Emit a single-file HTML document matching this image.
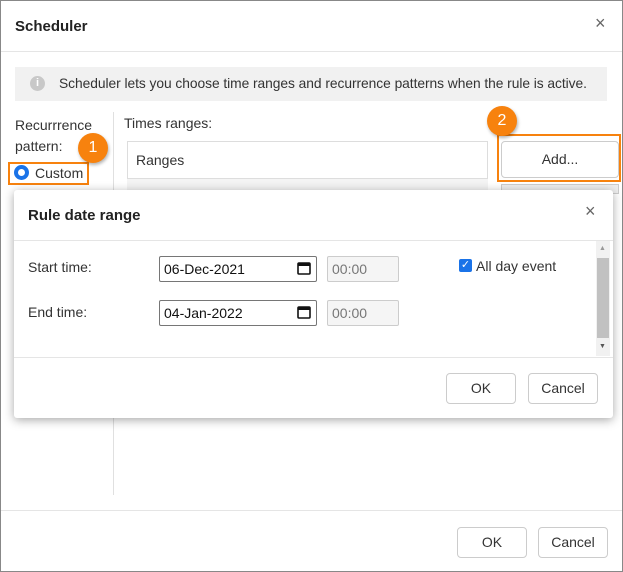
<!DOCTYPE html><html><head><style>
*{box-sizing:border-box}body{margin:0;width:623px;height:572px;font-family:"Liberation Sans",sans-serif;font-size:14px;color:#333;position:relative;overflow:hidden;background:#fff}
.a{position:absolute}
.btn{position:absolute;border:1px solid #ccc;border-radius:4px;background:#fff;text-align:center;font-size:14px;color:#333}
.badge{position:absolute;width:30px;height:30px;border-radius:50%;background:#f7820e;color:#fff;font-size:16px;text-align:center;line-height:30px;box-shadow:1px 2px 3px rgba(0,0,0,.3)}
.inp{position:absolute;border:1px solid #767676;border-radius:2px;height:26px;font-size:14px;line-height:24px;padding-left:4px;color:#111}
.tm{position:absolute;border:1px solid #ccc;border-radius:2px;background:#f5f5f5;height:26px;width:72px;line-height:24px;padding-left:4px;color:#777}
</style></head><body>
<div class="a" style="left:0;top:0;width:623px;height:572px;border:1px solid #888"></div>
<div class="a" style="left:15px;top:18px;font-size:15px;font-weight:bold;color:#222">Scheduler</div>
<div class="a" style="left:595px;top:13px;font-size:18px;color:#666">×</div>
<div class="a" style="left:1px;top:51px;width:621px;height:1px;background:#e5e5e5"></div>
<div class="a" style="left:15px;top:67px;width:592px;height:34px;background:#f1f1f1"></div>
<div class="a" style="left:30px;top:76px;width:15px;height:15px;border-radius:50%;background:#c8c8c8;color:#fff;font-size:11px;font-weight:bold;text-align:center;line-height:15px">i</div>
<div class="a" style="left:59px;top:76px;color:#333;font-size:13.8px;letter-spacing:-0.05px">Scheduler lets you choose time ranges and recurrence patterns when the rule is active.</div>
<div class="a" style="left:15px;top:115px;line-height:21px">Recurrrence<br>pattern:</div>
<div class="a" style="left:113px;top:112px;width:1px;height:383px;background:#e0e0e0"></div>
<div class="a" style="left:124px;top:115px">Times ranges:</div>
<div class="a" style="left:127px;top:141px;width:361px;height:38px;border:1px solid #ddd;padding:10px 8px">Ranges</div>
<div class="a" style="left:127px;top:179px;width:361px;height:12px;background:#f4f4f4"></div>
<div class="btn" style="left:501px;top:141px;width:118px;height:37px;line-height:35px">Add...</div>
<div class="a" style="left:501px;top:184px;width:118px;height:10px;background:#eee;border:1px solid #ccc"></div>
<div class="a" style="left:497px;top:134px;width:124px;height:48px;border:2px solid #f7820e"></div>
<div class="badge" style="left:487px;top:106px">2</div>
<div class="a" style="left:8px;top:162px;width:81px;height:23px;border:2px solid #f7820e"></div>
<div class="a" style="left:15px;top:166px;width:13px;height:13px;border-radius:50%;border:3px solid #1a73e8;background:#fff;box-shadow:0 0 0 1px #1a73e8"></div>
<div class="a" style="left:35px;top:165px">Custom</div>
<div class="badge" style="left:78px;top:133px">1</div>
<div class="a" style="left:1px;top:510px;width:621px;height:1px;background:#e5e5e5"></div>
<div class="btn" style="left:457px;top:527px;width:70px;height:31px;line-height:29px">OK</div>
<div class="btn" style="left:538px;top:527px;width:70px;height:31px;line-height:29px">Cancel</div>
<div class="a" style="left:14px;top:190px;width:599px;height:228px;background:#fff;border-radius:3px;box-shadow:0 2px 10px rgba(0,0,0,.35)">
<div class="a" style="left:14px;top:17px;font-size:15px;font-weight:bold;color:#222">Rule date range</div>
<div class="a" style="left:571px;top:11px;font-size:18px;color:#666">×</div>
<div class="a" style="left:0;top:50px;width:599px;height:1px;background:#e5e5e5"></div>
<div class="a" style="left:582px;top:51px;width:14px;height:115px;background:#f1f1f1"></div>
<div class="a" style="left:583px;top:68px;width:12px;height:80px;background:#c1c1c1"></div>
<div class="a" style="left:585px;top:55px;font-size:7px;color:#999">▲</div>
<div class="a" style="left:585px;top:153px;font-size:7px;color:#555">▼</div>
<div class="a" style="left:14px;top:69px">Start time:</div>
<div class="a" style="left:14px;top:114px">End time:</div>
<div class="inp" style="left:145px;top:66px;width:158px">06-Dec-2021</div>
<div class="inp" style="left:145px;top:110px;width:158px">04-Jan-2022</div>
<svg class="a" style="left:283px;top:71px" width="14" height="14"><rect x="1" y="2" width="12" height="11" rx="1" fill="none" stroke="#111" stroke-width="1.6"/><rect x="1" y="2" width="12" height="3" fill="#111"/></svg>
<svg class="a" style="left:283px;top:115px" width="14" height="14"><rect x="1" y="2" width="12" height="11" rx="1" fill="none" stroke="#111" stroke-width="1.6"/><rect x="1" y="2" width="12" height="3" fill="#111"/></svg>
<div class="tm" style="left:313px;top:66px">00:00</div>
<div class="tm" style="left:313px;top:110px">00:00</div>
<div class="a" style="left:445px;top:69px;width:13px;height:13px;border-radius:2px;background:#1a73e8;color:#fff;font-size:11px;line-height:13px;text-align:center">✓</div>
<div class="a" style="left:462px;top:68px">All day event</div>
<div class="a" style="left:0;top:167px;width:599px;height:1px;background:#e5e5e5"></div>
<div class="btn" style="left:432px;top:183px;width:70px;height:31px;line-height:29px">OK</div>
<div class="btn" style="left:514px;top:183px;width:70px;height:31px;line-height:29px">Cancel</div>
</div>
</body></html>
